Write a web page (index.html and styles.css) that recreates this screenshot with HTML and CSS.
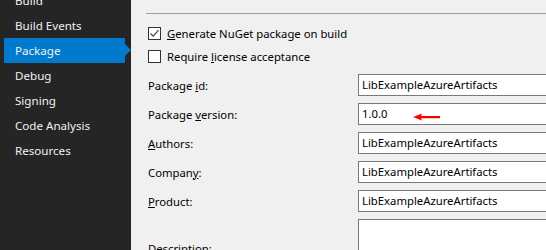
FILE: index.html
```html
<!DOCTYPE html>
<html>
<head>
<meta charset="utf-8">
<link rel="stylesheet" href="styles.css">
</head>
<body>
<div class="app">
  <nav class="sidebar">
    <div class="nav-item">Build</div>
    <div class="nav-item">Build Events</div>
    <div class="nav-item active">Package</div>
    <div class="nav-item">Debug</div>
    <div class="nav-item">Signing</div>
    <div class="nav-item">Code Analysis</div>
    <div class="nav-item">Resources</div>
  </nav>
  <main class="content">
    <div class="rule"></div>
    <label class="check-row"><span class="box checked"><svg viewBox="0 0 13 13" width="13" height="13"><path d="M2.5 6.5 L5.2 9.2 L10.5 3.2" fill="none" stroke="#444" stroke-width="1.2"/></svg></span><span><u>G</u>enerate NuGet package on build</span></label>
    <label class="check-row"><span class="box"></span><span>Require <u>l</u>icense acceptance</span></label>
    <div class="form">
      <div class="label">Package <u>i</u>d:</div>
      <div class="field"><div class="input">LibExampleAzureArtifacts</div></div>
      <div class="label">Package <u>v</u>ersion:</div>
      <div class="field"><div class="input">1.0.0</div>
        <svg class="marker" viewBox="0 0 28 8" width="28" height="8"><path d="M0 4 L9 0.5 L8 3 L27 3 L27 5.2 L8 5.2 L9 7.5 Z" fill="#f00"/></svg>
      </div>
      <div class="label"><u>A</u>uthors:</div>
      <div class="field"><div class="input">LibExampleAzureArtifacts</div></div>
      <div class="label">Compan<u>y</u>:</div>
      <div class="field"><div class="input">LibExampleAzureArtifacts</div></div>
      <div class="label"><u>P</u>roduct:</div>
      <div class="field"><div class="input">LibExampleAzureArtifacts</div></div>
      <div class="label"><u>D</u>escription:</div>
      <div class="field"><div class="input textarea"></div></div>
    </div>
  </main>
</div>
</body>
</html>
```

FILE: styles.css
```css
html, body {
  margin: 0;
  padding: 0;
}
body {
  width: 546px;
  height: 250px;
  overflow: hidden;
  font-family: "Noto Sans", "Open Sans", sans-serif;
  font-size: 11.3px;
  color: #000;
  background: #f0f0f0;
}
.app {
  display: flex;
  height: 250px;
}
.sidebar {
  width: 131px;
  flex: none;
  background: #252526;
  margin-top: -12px;
  height: 262px;
}
.nav-item {
  position: relative;
  height: 25px;
  line-height: 25px;
  margin-left: 4px;
  width: 121px;
  padding-left: 11px;
  box-sizing: border-box;
  color: #f1f1f1;
  font-size: 11.6px;
}
.nav-item.active {
  background: #007acc;
}
.nav-item.active::after {
  content: "";
  position: absolute;
  left: 121px;
  top: 6px;
  border-left: 6px solid #007acc;
  border-top: 6px solid transparent;
  border-bottom: 6px solid transparent;
}
.content {
  flex: 1;
  min-width: 0;
  padding-left: 17px;
  overflow: hidden;
}
.rule {
  height: 1px;
  background: #a0a0a0;
  margin: 13px 0 0 -2px;
}
.check-row {
  display: flex;
  align-items: center;
  gap: 6px;
  height: 13px;
  margin-top: 13px;
}
.check-row + .check-row {
  margin-top: 10px;
}
.box {
  width: 13px;
  height: 13px;
  box-sizing: border-box;
  border: 1px solid #333;
  background: #fff;
  flex: none;
  display: flex;
  align-items: center;
  justify-content: center;
}
.box svg {
  display: block;
  margin: -1px;
}
.form {
  display: grid;
  grid-template-columns: 210px 220px;
  grid-template-rows: repeat(5, 22px) 58px;
  row-gap: 7px;
  margin-top: 11px;
  align-items: center;
}
.field {
  position: relative;
  height: 100%;
}
.input {
  height: 22px;
  box-sizing: border-box;
  border: 1px solid #7a7a7a;
  background: #fff;
  padding-left: 3px;
  line-height: 20px;
  white-space: nowrap;
}
.textarea {
  height: 58px;
}
.marker {
  position: absolute;
  left: 55px;
  top: 10px;
}
```
